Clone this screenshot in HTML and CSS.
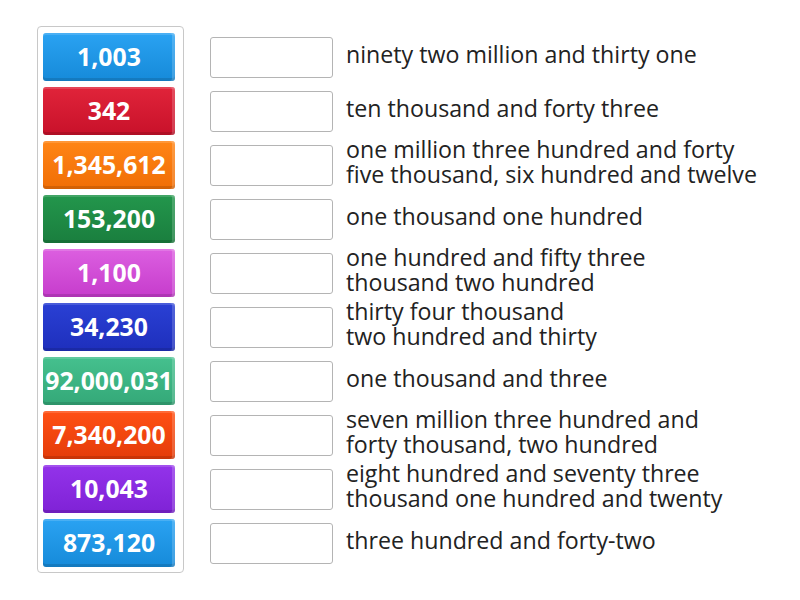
FILE: index.html
```html
<!DOCTYPE html>
<html>
<head>
<meta charset="utf-8">
<link rel="stylesheet" href="styles.css">
</head>
<body>
<div class="page">
  <div class="tiles">
    <div class="tile c1">1,003</div>
    <div class="tile c2">342</div>
    <div class="tile c3">1,345,612</div>
    <div class="tile c4">153,200</div>
    <div class="tile c5">1,100</div>
    <div class="tile c6">34,230</div>
    <div class="tile c7">92,000,031</div>
    <div class="tile c8">7,340,200</div>
    <div class="tile c9">10,043</div>
    <div class="tile c10">873,120</div>
  </div>
  <div class="rows">
    <div class="row"><div class="slot"></div><div class="label">ninety two million and thirty one</div></div>
    <div class="row"><div class="slot"></div><div class="label">ten thousand and forty three</div></div>
    <div class="row"><div class="slot"></div><div class="label">one million three hundred and forty<br>five thousand, six hundred and twelve</div></div>
    <div class="row"><div class="slot"></div><div class="label">one thousand one hundred</div></div>
    <div class="row"><div class="slot"></div><div class="label">one hundred and fifty three<br>thousand two hundred</div></div>
    <div class="row"><div class="slot"></div><div class="label">thirty four thousand<br>two hundred and thirty</div></div>
    <div class="row"><div class="slot"></div><div class="label">one thousand and three</div></div>
    <div class="row"><div class="slot"></div><div class="label">seven million three hundred and<br>forty thousand, two hundred</div></div>
    <div class="row"><div class="slot"></div><div class="label">eight hundred and seventy three<br>thousand one hundred and twenty</div></div>
    <div class="row"><div class="slot"></div><div class="label">three hundred and forty-two</div></div>
  </div>
</div>
</body>
</html>
```
FILE: styles.css
```css
html, body {
  margin: 0;
  padding: 0;
  background: #fff;
  font-family: "Open Sans", "Liberation Sans", sans-serif;
}
.page {
  display: flex;
  align-items: flex-start;
  padding: 26px 0 0 37px;
}
.tiles {
  display: flex;
  flex-direction: column;
  gap: 6px;
  padding: 6px 6px 5px 5px;
  border: 1px solid #c8c8c8;
  border-radius: 4px;
  width: 134px;
}
.tile {
  width: 132px;
  height: 48px;
  box-sizing: border-box;
  padding-bottom: 3px;
  border-radius: 3px;
  color: #fff;
  font-weight: 700;
  font-size: 24.8px;
  display: flex;
  align-items: center;
  justify-content: center;
  letter-spacing: 0;
  white-space: nowrap;
  box-shadow: inset -3px 0 0 rgba(255,255,255,0.18), inset 0 -3px 0 rgba(0,0,0,0.12), inset 0 2px 0 rgba(255,255,255,0.15);
}
.c1, .c10 { background: linear-gradient(#2aa2f2, #168ad9); }
.c2 { background: linear-gradient(#e0243a, #c8112a); }
.c3 { background: linear-gradient(#ff8516, #f06e06); }
.c4 { background: linear-gradient(#23964c, #1a7e3e); }
.c5 { background: linear-gradient(#dc5fe0, #c63ccc); }
.c6 { background: linear-gradient(#2a40d4, #1e2fbc); }
.c7 { background: linear-gradient(#45c08e, #34a878); }
.c8 { background: linear-gradient(#ff5014, #e43c0a); }
.c9 { background: linear-gradient(#9333ea, #7f22d6); }
.rows {
  display: flex;
  flex-direction: column;
  gap: 6px;
  margin-left: 26px;
  padding-top: 7px;
}
.row {
  height: 48px;
  display: flex;
  align-items: center;
  gap: 13px;
}
.slot {
  width: 123px;
  height: 41px;
  box-sizing: border-box;
  border: 1px solid #b4b4b4;
  border-radius: 3px;
  background: #fff;
  flex: none;
}
.label {
  font-size: 23.2px;
  line-height: 25px;
  color: #222;
  margin-top: -6px;
  white-space: nowrap;
}
```
